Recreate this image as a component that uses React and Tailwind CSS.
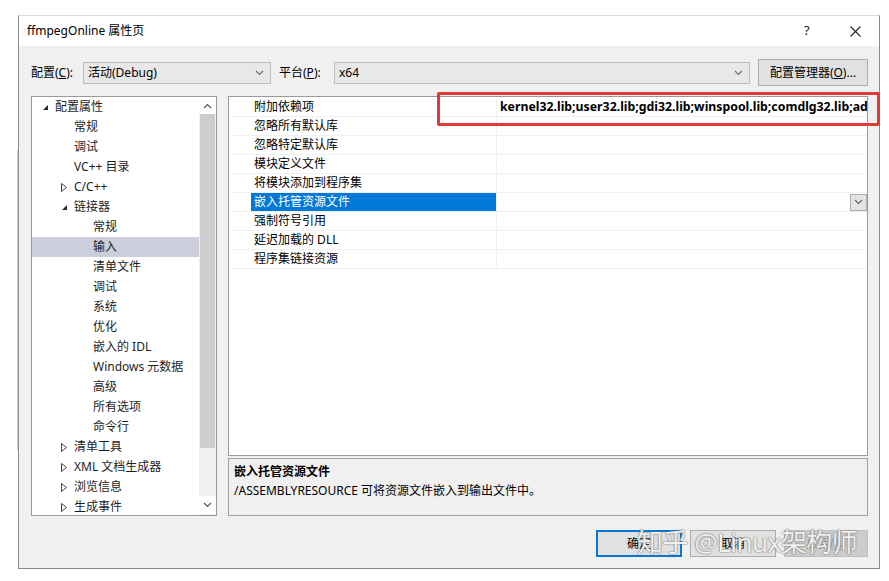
import React from 'react'

const TREE = [
  { label: '配置属性', level: 0, arrow: 'open' },
  { label: '常规', level: 1 },
  { label: '调试', level: 1 },
  { label: 'VC++ 目录', level: 1 },
  { label: 'C/C++', level: 1, arrow: 'closed' },
  { label: '链接器', level: 1, arrow: 'open' },
  { label: '常规', level: 2 },
  { label: '输入', level: 2, selected: true },
  { label: '清单文件', level: 2 },
  { label: '调试', level: 2 },
  { label: '系统', level: 2 },
  { label: '优化', level: 2 },
  { label: '嵌入的 IDL', level: 2 },
  { label: 'Windows 元数据', level: 2 },
  { label: '高级', level: 2 },
  { label: '所有选项', level: 2 },
  { label: '命令行', level: 2 },
  { label: '清单工具', level: 1, arrow: 'closed' },
  { label: 'XML 文档生成器', level: 1, arrow: 'closed' },
  { label: '浏览信息', level: 1, arrow: 'closed' },
  { label: '生成事件', level: 1, arrow: 'closed' },
]

const PROPS = [
  { name: '附加依赖项', value: 'kernel32.lib;user32.lib;gdi32.lib;winspool.lib;comdlg32.lib;ad' },
  { name: '忽略所有默认库' },
  { name: '忽略特定默认库' },
  { name: '模块定义文件' },
  { name: '将模块添加到程序集' },
  { name: '嵌入托管资源文件', selected: true },
  { name: '强制符号引用' },
  { name: '延迟加载的 DLL' },
  { name: '程序集链接资源' },
]

const FONT = "font-['Noto_Sans','Noto_Sans_CJK_SC',sans-serif]"

function Arrow({ type }) {
  if (type === 'open') {
    return (
      <svg width="7" height="7" viewBox="0 0 7 7">
        <polygon points="6,1 6,6 1,6" fill="#262626" />
      </svg>
    )
  }
  return (
    <svg width="6" height="9" viewBox="0 0 6 9">
      <polygon points="0.5,0.5 5.5,4.5 0.5,8.5" fill="none" stroke="#404040" strokeWidth="1" />
    </svg>
  )
}

function Chevron({ up, color = '#555' }) {
  return (
    <svg width="9" height="6" viewBox="0 0 9 6">
      <polyline
        points={up ? '1,5 4.5,1.5 8,5' : '1,1 4.5,4.5 8,1'}
        fill="none"
        stroke={color}
        strokeWidth="1.2"
      />
    </svg>
  )
}

function Select({ value, width }) {
  return (
    <div
      className={`${width} h-[22px] flex items-center justify-between bg-[#e8e8e8] border border-[#bcbcbc] pl-[4px] pr-[6px]`}
    >
      <span>{value}</span>
      <Chevron color="#707070" />
    </div>
  )
}

export default function App() {
  return (
    <div className={`relative w-[889px] h-[581px] bg-white text-[12px] text-black ${FONT} overflow-hidden`}>
      <div className="absolute left-[17px] top-[150px] w-px h-[300px] bg-[#c8ccd0]" />
      {/* dialog window */}
      <div className="ml-[18px] mt-[15px] w-[862px] h-[554px] border border-[#8a8a8a] border-t-[#dcdcdc] flex flex-col">
        {/* title bar */}
        <div className="h-[30px] bg-white flex items-center pl-[8px]">
          <span className="flex-1">ffmpegOnline 属性页</span>
          <span className="w-[10px] text-[13px] mr-[36px] text-[#222]">?</span>
          <svg width="11" height="11" viewBox="0 0 11 11" className="mr-[18px]">
            <line x1="0.5" y1="0.5" x2="10.5" y2="10.5" stroke="#222" strokeWidth="1.1" />
            <line x1="10.5" y1="0.5" x2="0.5" y2="10.5" stroke="#222" strokeWidth="1.1" />
          </svg>
        </div>

        {/* body */}
        <div className="flex-1 bg-[#f0f0f0] flex flex-col pl-[12px]">
          {/* config row */}
          <div className="mt-[13px] h-[27px] flex items-center">
            <span className="w-[52px]">配置(<u>C</u>):</span>
            <Select value="活动(Debug)" width="w-[188px]" />
            <span className="ml-[8px] w-[55px]">平台(<u>P</u>):</span>
            <Select value="x64" width="w-[416px]" />
            <div className="ml-[8px] w-[110px] h-[27px] flex items-center justify-center bg-[#e1e1e1] border border-[#adadad]">
              配置管理器(<u>O</u>)...
            </div>
          </div>

          {/* main area */}
          <div className="mt-[10px] flex h-[420px]">
            {/* tree */}
            <div className="w-[186px] h-[420px] border border-[#9a9a9a] bg-white flex overflow-hidden">
              <div className="flex-1 flex flex-col">
                {TREE.map((item, i) => (
                  <div
                    key={i}
                    className={`h-[20px] shrink-0 flex items-center ${item.selected ? 'bg-[#cccedb]' : ''}`}
                  >
                    <span
                      className={`w-[13px] flex items-center justify-start ${
                        item.level === 0 ? 'ml-[10px]' : item.level === 1 ? 'ml-[29px]' : 'ml-[48px]'
                      }`}
                    >
                      {item.arrow && <Arrow type={item.arrow} />}
                    </span>
                    <span className="text-[#1e1e1e]">{item.label}</span>
                  </div>
                ))}
              </div>
              {/* scrollbar */}
              <div className="w-[17px] flex flex-col bg-[#f0f0f0]">
                <div className="h-[17px] flex items-center justify-center bg-white">
                  <Chevron up />
                </div>
                <div className="mx-[1px] h-[334px] bg-[#cdcdcd]" />
                <div className="flex-1" />
                <div className="h-[18px] flex items-center justify-center bg-white mb-[1px]">
                  <Chevron />
                </div>
              </div>
            </div>

            {/* right column */}
            <div className="ml-[11px] w-[640px] flex flex-col">
              <div className="h-[360px] border border-[#9a9a9a] bg-white pt-[1px]">
                {PROPS.map((p, i) => (
                  <div key={i} className="h-[19px] flex border-b border-[#f0f0f0] ml-[1px]">
                    <div className="w-[21px]" />
                    <div
                      className={`w-[245px] flex items-center pl-[3px] ${
                        p.selected ? 'bg-[#0078d7] text-white' : ''
                      }`}
                    >
                      {p.name}
                    </div>
                    <div className="flex-1 flex items-center border-l border-[#f0f0f0] pl-[3px] overflow-hidden whitespace-nowrap font-bold text-[12.3px]">
                      <span className="flex-1 overflow-hidden">{p.value}</span>
                      {p.selected && (
                        <span className="w-[17px] h-[17px] flex items-center justify-center bg-[#e3e3e3] border border-[#adadad]">
                          <Chevron color="#666" />
                        </span>
                      )}
                    </div>
                  </div>
                ))}
              </div>
              <div className="mt-[2px] h-[58px] border border-[#a0a0a0] bg-[#f0f0f0] pl-[5px] pt-[3px] leading-[19px]">
                <div className="font-bold">嵌入托管资源文件</div>
                <div>/ASSEMBLYRESOURCE 可将资源文件嵌入到输出文件中。</div>
              </div>
            </div>
          </div>

          {/* buttons */}
          <div className="mt-[14px] h-[27px] flex justify-end pr-[11px] gap-[8px]">
            <div className="w-[86px] h-[27px] flex items-center justify-center bg-[#e1e1e1] border-2 border-[#0078d7]">
              确定
            </div>
            <div className="w-[86px] h-[27px] flex items-center justify-center bg-[#e1e1e1] border border-[#adadad]">
              取消
            </div>
            <div className="w-[84px] h-[27px] flex items-center justify-center bg-[#cccccc] border border-[#bfbfbf] text-[#a0a0a0]">
              应用(<u>A</u>)
            </div>
          </div>
        </div>
      </div>

      {/* red annotation box */}
      <div className="absolute left-[437px] top-[92px] w-[443px] h-[34px] border-[3px] border-[#e03a36] rounded-[2px]" />

      {/* watermark */}
      <div className="absolute left-[637px] top-[526px] text-[26px] leading-[32px] tracking-[-0.5px] text-white/90 [text-shadow:0_0_2px_#7a7a7a,0_0_1px_#555] whitespace-nowrap">
        知乎 @Linux架构师
      </div>
    </div>
  )
}
